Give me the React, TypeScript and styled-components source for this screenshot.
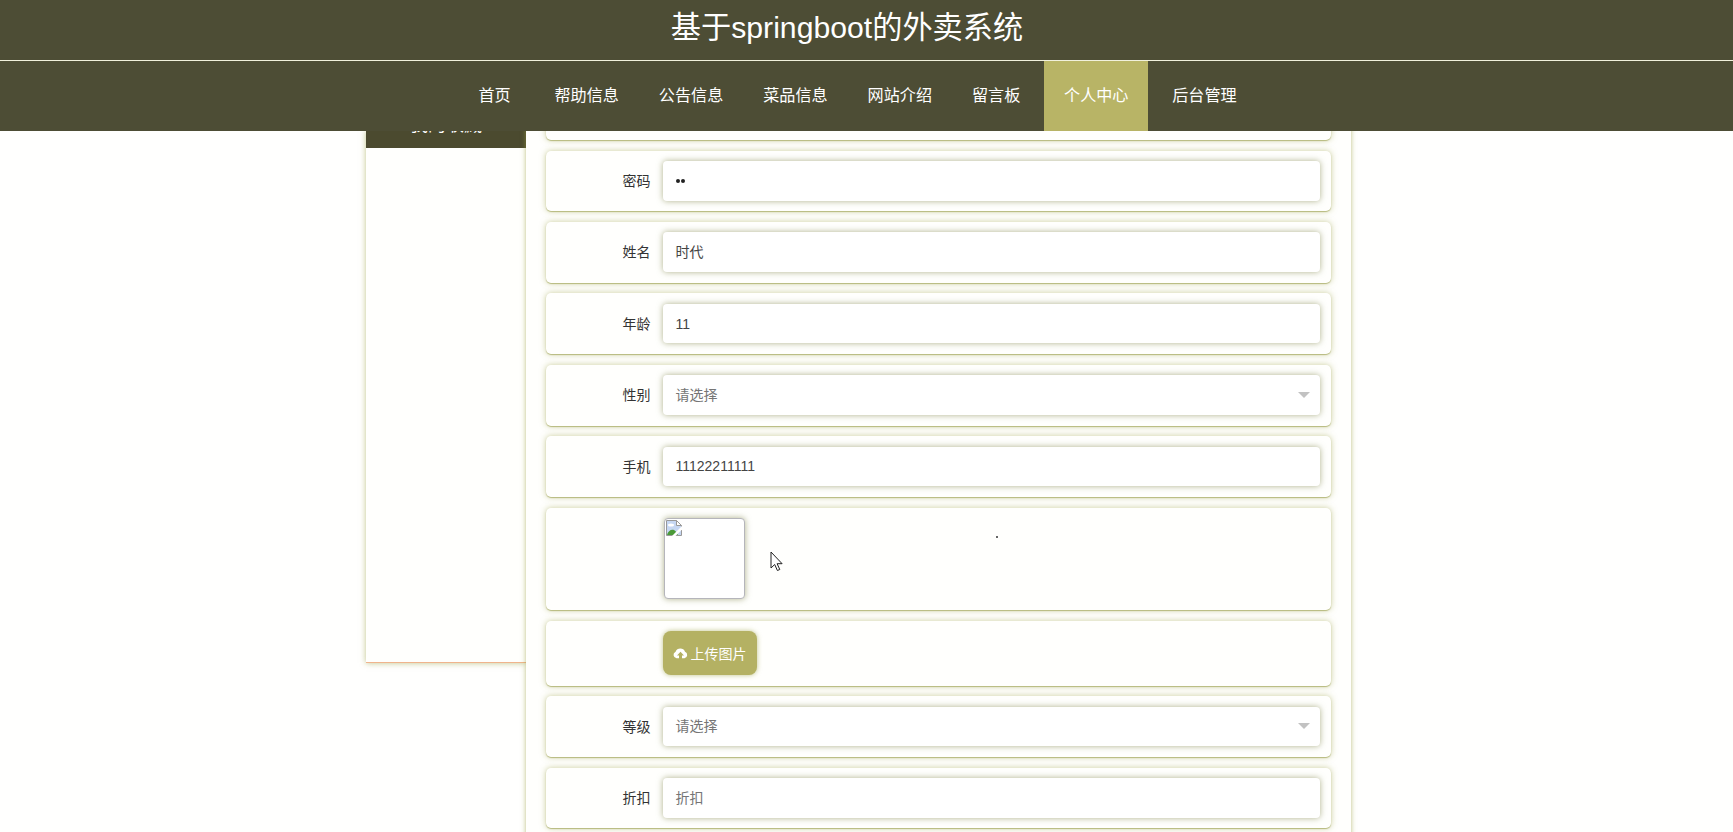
import React from 'react';
import styled, { createGlobalStyle, css } from 'styled-components';

const GlobalStyle = createGlobalStyle`
  * { box-sizing: border-box; }
  html, body { margin: 0; padding: 0; overflow: hidden; }
  body {
    background: #fffffe;
    color: #333;
    font: 14px/24px "Liberation Sans", "Noto Sans CJK SC", sans-serif;
  }
`;

const Page = styled.div`
  position: relative;
  height: 832px;
  overflow: hidden;
  display: flex;
  flex-direction: column;
`;

const Header = styled.header`
  flex: none;
  height: 131px;
  background: #4d4d35;
  color: #fff;
`;

const Title = styled.h1`
  margin: 0;
  height: 61px;
  padding-right: 39px;
  border-bottom: 1px solid #f1f1dc;
  font-size: 30.2px;
  font-weight: 400;
  line-height: 55px;
  text-align: center;
`;

const Nav = styled.nav`
  display: flex;
  height: 70px;
  padding-left: 458.5px;
`;

const NavItem = styled.a<{ $active?: boolean; $gap?: boolean }>`
  padding: 0 20px;
  margin-right: ${p => (p.$gap ? '3.8px' : '0')};
  background: ${p => (p.$active ? '#b8b466' : 'transparent')};
  font-size: 16.1px;
  line-height: 69px;
  white-space: nowrap;
`;

const Main = styled.main`
  flex: 1;
  min-height: 0;
  display: flex;
  align-items: flex-start;
  padding-left: 366px;
`;

const Sidebar = styled.aside`
  width: 160px;
  height: 532px;
  background: #fffffd;
  border-bottom: 1px solid #f0b48c;
  box-shadow: 0 0 6px rgba(150, 155, 60, 0.6);
`;

const SideItem = styled.div`
  height: 17px;
  overflow: hidden;
  background: #4b4a2f;
  color: #fff;
  font-size: 18px;
  line-height: 24px;
  text-align: center;
  display: flex;
  justify-content: center;
  align-items: flex-start;
  span { margin-top: -18px; }
`;

const Panel = styled.section`
  position: relative;
  width: 825px;
  height: 760px;
  margin-top: -30px;
  padding: 0 20.5px 0 20px;
  background: #fffffd;
  box-shadow: 0 0 5px rgba(150, 155, 60, 0.65);
`;

const HeaderLayer = styled.div`
  position: relative;
  z-index: 2;
`;

const Row = styled.div<{ $h?: number }>`
  display: flex;
  height: ${p => p.$h ?? 60.8}px;
  margin-bottom: 10.6px;
  padding: 10.4px 10.5px 10px 0;
  border-radius: 5px;
  background: #fffffd;
  box-shadow: 0 1px 1px rgba(150, 155, 70, 0.6), 0 0 6px rgba(150, 155, 60, 0.5);
`;

const Label = styled.label`
  width: 117px;
  padding-right: 12.5px;
  line-height: 40px;
  text-align: right;
`;

const control = css`
  border-radius: 4px;
  background: #fff;
  box-shadow: 0 0 6px rgba(130, 135, 80, 0.65);
`;

const Field = styled.div<{ $muted?: boolean }>`
  ${control}
  flex: 1;
  display: flex;
  align-items: center;
  justify-content: space-between;
  height: 39.6px;
  padding: 0 10px 0 12.5px;
  color: ${p => (p.$muted ? '#757575' : '#444')};
`;

const Caret = styled.i`
  border: 6px solid transparent;
  border-top-color: #c2c2c2;
  border-bottom: 0;
`;

const Dots = styled.span`
  display: flex;
  gap: 1px;
  margin-top: 1px;
  i { width: 4px; height: 4px; border-radius: 50%; background: #222; }
`;

const Picture = styled.div`
  ${control}
  width: 81px;
  height: 81px;
  margin-left: 0.5px;
  padding: 1px;
  border: 1px solid #b5b5bb;
  svg { display: block; }
`;

const Upload = styled.button`
  display: flex;
  align-items: center;
  justify-content: center;
  gap: 3px;
  width: 94px;
  height: 44px;
  padding: 0 1px 1px 0;
  border: 0;
  border-radius: 8px;
  background: #b4b163;
  box-shadow: 0 0 5px rgba(150, 155, 60, 0.6);
  color: #fff;
  font: 14px "Liberation Sans", "Noto Sans CJK SC", sans-serif;
`;

const Pointer = styled.svg`
  position: absolute;
  left: 770px;
  top: 551px;
  z-index: 3;
`;

const Speck = styled.i`
  position: absolute;
  left: 996px;
  top: 536px;
  width: 2px;
  height: 2px;
  background: #666;
`;

const BrokenImage = () => (
  <svg width="16" height="16" viewBox="0 0 16 16">
    <path d="M.5.5h10l5 5v10H.5z" fill="#c6d7f3" stroke="#999" />
    <path d="M10.5.5v5h5z" fill="#fff" stroke="#999" />
    <ellipse cx="5" cy="5" rx="3" ry="1.5" fill="#fff" />
    <path d="M1 15c1-4 4-6 7-5 2 1 3 3 4 5z" fill="#4a9a38" />
    <path d="M16 6v3.500L9.500 16H6z" fill="#fff" />
  </svg>
);

const CloudUpload = () => (
  <svg width="15" height="12" viewBox="0 0 15 12">
    <path d="M3.500 11.200A3.400 3.400 0 0 1 2.600 4.700A5 5 0 0 1 12 4.700A3.400 3.400 0 0 1 11.500 11.200H9V8.500H11L7.500 4.800L4 8.500H6V11.200Z" fill="#fff" />
  </svg>
);

const menu: { text: string; active?: boolean; gap?: boolean }[] = [
  { text: '首页', gap: true },
  { text: '帮助信息' },
  { text: '公告信息' },
  { text: '菜品信息' },
  { text: '网站介绍' },
  { text: '留言板', gap: true },
  { text: '个人中心', active: true, gap: true },
  { text: '后台管理' },
];

const TextRow = ({ label, value, muted, select }: { label: string; value: React.ReactNode; muted?: boolean; select?: boolean }) => (
  <Row>
    <Label>{label}</Label>
    <Field $muted={muted}>
      <span>{value}</span>
      {select && <Caret />}
    </Field>
  </Row>
);

export default function App() {
  return (
    <>
      <GlobalStyle />
      <Page>
        <HeaderLayer>
          <Header>
            <Title>基于springboot的外卖系统</Title>
            <Nav>
              {menu.map(m => (
                <NavItem key={m.text} $active={m.active} $gap={m.gap}>{m.text}</NavItem>
              ))}
            </Nav>
          </Header>
        </HeaderLayer>
        <Main>
          <Sidebar>
            <SideItem><span>我的收藏</span></SideItem>
          </Sidebar>
          <Panel>
            <Row $h={39} />
            <TextRow label="密码" value={<Dots><i /><i /></Dots>} />
            <TextRow label="姓名" value="时代" />
            <TextRow label="年龄" value="11" />
            <TextRow label="性别" value="请选择" muted select />
            <TextRow label="手机" value="11122211111" />
            <Row $h={102.8}>
              <Label />
              <Picture><BrokenImage /></Picture>
            </Row>
            <Row $h={64.6}>
              <Label />
              <Upload><CloudUpload />上传图片</Upload>
            </Row>
            <TextRow label="等级" value="请选择" muted select />
            <TextRow label="折扣" value="折扣" muted />
            <Row />
          </Panel>
        </Main>
        <Speck />
        <Pointer width="14" height="21" viewBox="0 0 14 21">
          <path d="M1 1v16l3.700-3.500 2.700 6 2.400-1-2.700-5.800h5z" fill="#fff" stroke="#222" />
        </Pointer>
      </Page>
    </>
  );
}
